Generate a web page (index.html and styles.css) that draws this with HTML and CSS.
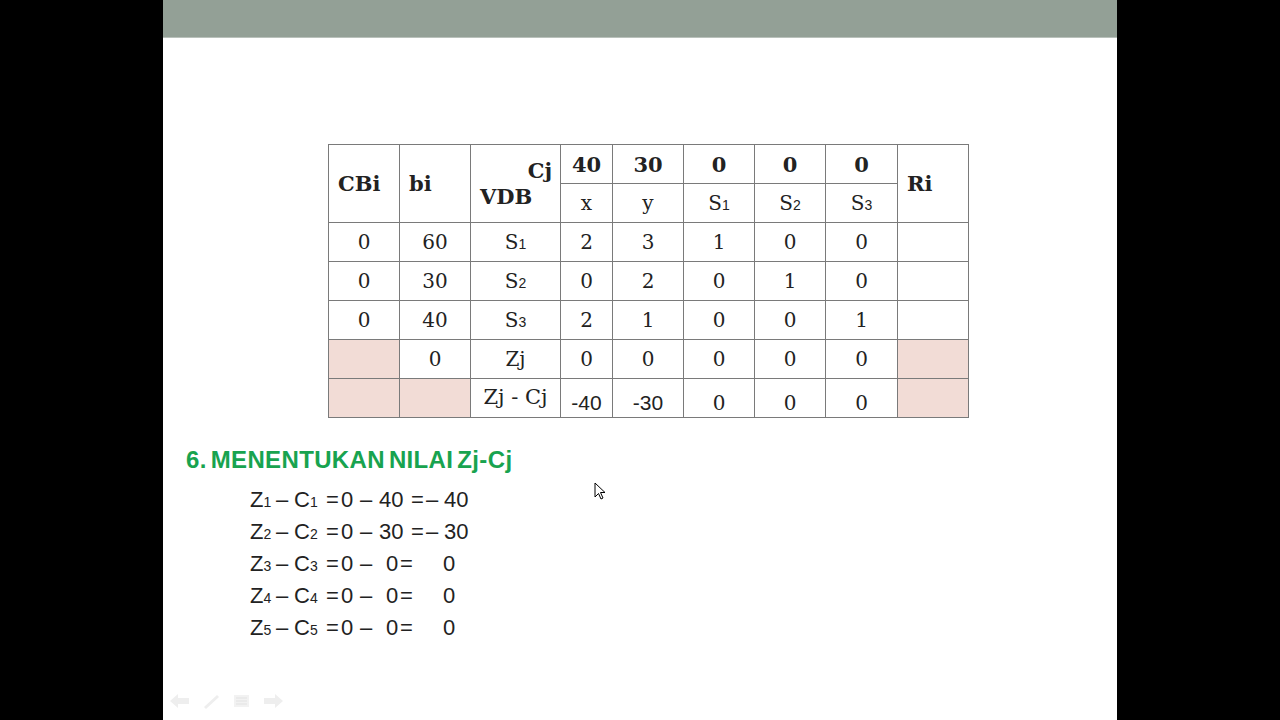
FILE: index.html
```html
<!DOCTYPE html>
<html>
<head>
<meta charset="utf-8">
<link rel="stylesheet" href="styles.css">
</head>
<body>
<div class="slide">
  <div class="topbar"></div>
  <div class="content">
    <table class="tab">
      <colgroup>
        <col class="w71"><col class="w71"><col class="w90"><col class="w52"><col class="w71"><col class="w71"><col class="w71"><col class="w72"><col class="w71">
      </colgroup>
      <tr class="r1">
        <td rowspan="2" class="hd left">CBi</td>
        <td rowspan="2" class="hd left">bi</td>
        <td rowspan="2" class="cjvdb"><div class="cj">Cj</div><div class="vdb">VDB</div></td>
        <td class="hd">40</td>
        <td class="hd">30</td>
        <td class="hd">0</td>
        <td class="hd">0</td>
        <td class="hd">0</td>
        <td rowspan="2" class="hd left">Ri</td>
      </tr>
      <tr class="r2">
        <td>x</td><td>y</td>
        <td>S<span class="sb">1</span></td>
        <td>S<span class="sb">2</span></td>
        <td>S<span class="sb">3</span></td>
      </tr>
      <tr>
        <td>0</td><td>60</td><td>S<span class="sb">1</span></td><td>2</td><td>3</td><td>1</td><td>0</td><td>0</td><td></td>
      </tr>
      <tr>
        <td>0</td><td>30</td><td>S<span class="sb">2</span></td><td>0</td><td>2</td><td>0</td><td>1</td><td>0</td><td></td>
      </tr>
      <tr>
        <td>0</td><td>40</td><td>S<span class="sb">3</span></td><td>2</td><td>1</td><td>0</td><td>0</td><td>1</td><td></td>
      </tr>
      <tr>
        <td class="pink"></td><td>0</td><td>Zj</td><td>0</td><td>0</td><td>0</td><td>0</td><td>0</td><td class="pink"></td>
      </tr>
      <tr class="last">
        <td class="pink"></td><td class="pink"></td><td class="zc">Zj - Cj</td><td class="neg">-40</td><td class="neg">-30</td><td class="low">0</td><td class="low">0</td><td class="low">0</td><td class="pink"></td>
      </tr>
    </table>

    <h2 class="heading">6. MENENTUKAN NILAI Zj-Cj</h2>

    <div class="eqs">
      <div class="eq"><span class="z">Z<span class="s">1</span></span><span class="m">–</span><span class="c">C<span class="s">1</span></span><span class="e">=</span><span class="a">0</span><span class="m2">–</span><span class="b">40</span><span class="e2">=</span><span class="m3">–</span><span class="r">40</span></div>
      <div class="eq"><span class="z">Z<span class="s">2</span></span><span class="m">–</span><span class="c">C<span class="s">2</span></span><span class="e">=</span><span class="a">0</span><span class="m2">–</span><span class="b">30</span><span class="e2">=</span><span class="m3">–</span><span class="r">30</span></div>
      <div class="eq"><span class="z">Z<span class="s">3</span></span><span class="m">–</span><span class="c">C<span class="s">3</span></span><span class="e">=</span><span class="a">0</span><span class="m2b">–</span><span class="b0">0</span><span class="e3">=</span><span class="r0">0</span></div>
      <div class="eq"><span class="z">Z<span class="s">4</span></span><span class="m">–</span><span class="c">C<span class="s">4</span></span><span class="e">=</span><span class="a">0</span><span class="m2b">–</span><span class="b0">0</span><span class="e3">=</span><span class="r0">0</span></div>
      <div class="eq"><span class="z">Z<span class="s">5</span></span><span class="m">–</span><span class="c">C<span class="s">5</span></span><span class="e">=</span><span class="a">0</span><span class="m2b">–</span><span class="b0">0</span><span class="e3">=</span><span class="r0">0</span></div>
    </div>
  </div>

  <div class="nav">
    <svg width="22" height="16" viewBox="0 0 22 16"><path d="M1 8 L9 1 L9 5 L20 5 L20 11 L9 11 L9 15 Z" fill="#eeeeee"/></svg>
    <svg width="22" height="16" viewBox="0 0 22 16"><path d="M4 14 L17 2 L19 4 L6 16 Z" fill="#eeeeee"/></svg>
    <svg width="22" height="16" viewBox="0 0 22 16"><rect x="3" y="2" width="15" height="12" fill="#f2f2f2"/><path d="M5 5 H16 M5 8 H16 M5 11 H16" stroke="#e2e2e2" stroke-width="1.2"/></svg>
    <svg width="22" height="16" viewBox="0 0 22 16"><path d="M21 8 L13 1 L13 5 L2 5 L2 11 L13 11 L13 15 Z" fill="#eeeeee"/></svg>
  </div>

  <svg class="cursor" width="14" height="20" viewBox="0 0 14 20"><path d="M1 1 L1 15 L4.5 11.5 L7 17 L9 16 L6.5 10.5 L11 10.5 Z" fill="#fff" stroke="#000" stroke-width="1"/></svg>
</div>
</body>
</html>
```
FILE: styles.css
```css
html, body {
  margin: 0;
  padding: 0;
  background: #000;
}
.slide {
  position: relative;
  width: 954px;
  height: 720px;
  margin-left: 163px;
  background: #fff;
  overflow: hidden;
}
.topbar {
  height: 37px;
  background: #93a096;
  border-bottom: 1px solid #b9c1bb;
}
.content {
  padding: 106px 0 0 0;
}
.tab {
  margin-left: 165px;
  width: 641px;
  table-layout: fixed;
  border-collapse: collapse;
  font-family: "DejaVu Serif", serif;
  font-size: 20px;
  color: #222;
}
.w71 { width: 71px; }
.w72 { width: 72px; }
.w90 { width: 90px; }
.w52 { width: 52px; }
.tab td {
  border: 1px solid #7a7a7a;
  height: 39px;
  padding: 0;
  text-align: center;
  vertical-align: middle;
  box-sizing: border-box;
}
.tab .hd {
  font-weight: bold;
  font-size: 21px;
}
.tab .left {
  text-align: left;
  padding-left: 9px;
}
.tab .cjvdb {
  font-weight: bold;
  font-size: 21px;
  padding: 0 8px 0 9px;
}
.cj {
  text-align: right;
  line-height: 27px;
}
.vdb {
  text-align: left;
  line-height: 26px;
}
.sb {
  font-family: "Liberation Sans", sans-serif;
  font-size: 14px;
}
.pink {
  background: #f2dcd6;
}
.neg, .low {
  vertical-align: bottom !important;
  padding-bottom: 2px !important;
}
.neg {
  font-family: "Liberation Sans", sans-serif;
  font-size: 21px;
}
.zc {
  vertical-align: top !important;
  padding-top: 6px !important;
  font-size: 21px;
}
.heading {
  margin: 27px 0 0 23px;
  font-family: "Liberation Sans", sans-serif;
  font-weight: bold;
  font-size: 24px;
  letter-spacing: 0.35px;
  word-spacing: -3px;
  color: #18a34f;
  line-height: 30px;
}
.eqs {
  margin: 9px 0 0 87px;
  font-family: "Liberation Sans", sans-serif;
  font-size: 22px;
  color: #222;
}
.eq {
  display: flex;
  height: 32px;
  line-height: 32px;
  align-items: baseline;
}
.eq .s {
  font-size: 14px;
}
.z { width: 26px; }
.m { width: 18px; }
.c { width: 32px; }
.e { width: 15px; }
.a { width: 19px; }
.m2 { width: 19px; }
.m2b { width: 26px; }
.b { width: 32px; }
.e2 { width: 15px; }
.m3 { width: 18px; }
.b0 { width: 14px; }
.e3 { width: 43px; }
.nav {
  position: absolute;
  left: 6px;
  top: 693px;
  display: flex;
  gap: 9px;
}
.cursor {
  position: absolute;
  left: 431px;
  top: 482px;
}
```
